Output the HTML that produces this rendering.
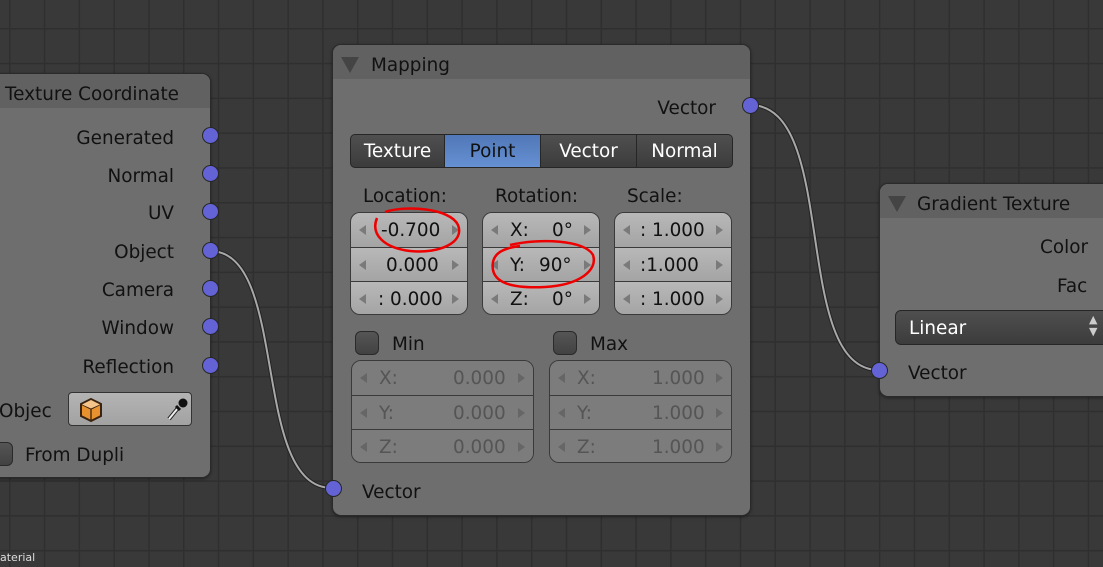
<!DOCTYPE html>
<html><head><meta charset="utf-8"><style>
*{margin:0;padding:0;box-sizing:border-box}
body{width:1103px;height:567px;overflow:hidden;position:relative;background:#393939;
background-image:linear-gradient(#2f2f2f 1.4px,transparent 1.4px),linear-gradient(90deg,#2f2f2f 1.4px,transparent 1.4px);
background-size:34.8px 34.8px;background-position:9px 28px;
font-family:"DejaVu Sans","Liberation Sans",sans-serif;font-size:18.4px;color:#111}
.a{position:absolute;white-space:nowrap}
.node{position:absolute;background:#6e6e6e;border:1px solid #2a2a2a;border-radius:9px;overflow:hidden;box-shadow:0 1px 3px rgba(0,0,0,.4)}
.hdr{position:absolute;left:0;right:0;top:0;height:34px;background:#616161}
.tri{position:absolute;width:0;height:0;border-left:9px solid transparent;border-right:9px solid transparent;border-top:16px solid #444}
.sock{position:absolute;width:17px;height:17px;border-radius:50%;background:#6363d6;border:1px solid #262626;margin:-8.5px 0 0 -8.5px}
.r{text-align:right}
.tab{position:absolute;top:133px;height:34px;background:linear-gradient(#4f4f4f,#3c3c3c);color:#fff;text-align:center;line-height:34px;border:1px solid #262626}
.fld{position:absolute;border:1px solid #3a3a3a;border-radius:10px;overflow:hidden}
.row{position:absolute;left:0;right:0;height:34px;background:linear-gradient(#b8b8b8,#a4a4a4);border-top:1px solid #3a3a3a;line-height:35px}
.row:first-child{border-top:none}
.dis .row{background:#7c7c7c;color:#555}
.la,.ra{position:absolute;top:12px;width:0;height:0;border-top:5px solid transparent;border-bottom:5px solid transparent}
.la{left:8px;border-right:7px solid #7a7a7a}
.ra{right:8px;border-left:7px solid #7a7a7a}
.dis .la{border-right-color:#666}.dis .ra{border-left-color:#666}
.chk{position:absolute;width:24px;height:24px;border-radius:6px;background:linear-gradient(#555,#424242);border:1px solid #2a2a2a}
</style></head><body>

<svg class="a" style="left:0;top:0" width="1103" height="567">
<path d="M210 251 C 290 251, 250 488, 332 488" stroke="#222" stroke-width="4" fill="none"/>
<path d="M210 251 C 290 251, 250 488, 332 488" stroke="#a8a8a8" stroke-width="2" fill="none"/>
<path d="M750 105 C 840 105, 790 370, 879 370" stroke="#222" stroke-width="4" fill="none"/>
<path d="M750 105 C 840 105, 790 370, 879 370" stroke="#a8a8a8" stroke-width="2" fill="none"/>
</svg>

<!-- Texture Coordinate -->
<div class="node" style="left:-12px;top:73px;width:223px;height:405px">
<div class="hdr"></div>
<div class="a" style="left:16px;top:10px">Texture Coordinate</div>
<div class="a r" style="right:36px;top:54px">Generated</div>
<div class="a r" style="right:36px;top:92px">Normal</div>
<div class="a r" style="right:36px;top:129px">UV</div>
<div class="a r" style="right:36px;top:168px">Object</div>
<div class="a r" style="right:36px;top:206px">Camera</div>
<div class="a r" style="right:36px;top:244px">Window</div>
<div class="a r" style="right:36px;top:283px">Reflection</div>
<div class="a" style="left:10px;top:327px">Objec</div>
<div class="a" style="left:79px;top:318px;width:124px;height:34px;border:1px solid #333;border-radius:4px;background:linear-gradient(#b4b4b4,#a2a2a2)"></div>
<svg class="a" style="left:89px;top:323px" width="26" height="26" viewBox="0 0 26 26"><path d="M13 2 L23 7 L23 19 L13 24 L3 19 L3 7Z" fill="#e8912f" stroke="#3a2410" stroke-width="2"/><path d="M3 7 L13 12 L23 7 M13 12 V24" stroke="#3a2410" stroke-width="1.3" fill="none"/><path d="M4 7.5 L13 3 L22 7.5 L13 11.5Z" fill="#f5c48a"/></svg>
<svg class="a" style="left:176px;top:322px" width="24" height="26" viewBox="0 0 24 26"><path d="M4 23 L13 12" stroke="#222" stroke-width="4"/><path d="M4 23 L13 12" stroke="#eee" stroke-width="2"/><circle cx="18" cy="7" r="4.5" fill="#111"/><path d="M11 10 L15 14" stroke="#111" stroke-width="3"/></svg>
<div class="chk" style="left:0;top:368px"></div>
<div class="a" style="left:36px;top:371px">From Dupli</div>
</div>
<div class="sock" style="left:210px;top:135px"></div>
<div class="sock" style="left:210px;top:173px"></div>
<div class="sock" style="left:210px;top:211px"></div>
<div class="sock" style="left:210px;top:250px"></div>
<div class="sock" style="left:210px;top:288px"></div>
<div class="sock" style="left:210px;top:326px"></div>
<div class="sock" style="left:210px;top:365px"></div>
<div class="a" style="left:0;top:551px;font-size:11px;color:#ddd">aterial</div>

<!-- Mapping -->
<div class="node" style="left:332px;top:44px;width:419px;height:472px">
<div class="hdr"></div>
<div class="tri" style="left:8px;top:12px"></div>
<div class="a" style="left:38px;top:10px">Mapping</div>
<div class="a r" style="right:34px;top:53px">Vector</div>
<div class="tab" style="left:17px;width:95px;border-radius:5px 0 0 5px;top:89px">Texture</div>
<div class="tab" style="left:111px;width:97px;top:89px;background:linear-gradient(#5178b8,#6590d2);color:#111">Point</div>
<div class="tab" style="left:207px;width:97px;top:89px">Vector</div>
<div class="tab" style="left:303px;width:97px;top:89px;border-radius:0 5px 5px 0">Normal</div>
<div class="a" style="left:30px;top:141px">Location:</div>
<div class="a" style="left:162px;top:141px">Rotation:</div>
<div class="a" style="left:294px;top:141px">Scale:</div>

<div class="fld" style="left:17px;top:167px;width:118px;height:103px">
<div class="row" style="top:0"><i class="la"></i><span class="a" style="left:30px">-0.700</span><i class="ra"></i></div>
<div class="row" style="top:34px"><i class="la"></i><span class="a" style="left:35px">0.000</span><i class="ra"></i></div>
<div class="row" style="top:68px"><i class="la"></i><span class="a" style="left:27px">: 0.000</span><i class="ra"></i></div>
</div>
<div class="fld" style="left:149px;top:167px;width:118px;height:103px">
<div class="row" style="top:0"><i class="la"></i><span class="a" style="left:27px">X:</span><span class="a" style="left:69px">0°</span><i class="ra"></i></div>
<div class="row" style="top:34px"><i class="la"></i><span class="a" style="left:27px">Y:</span><span class="a" style="left:56px">90°</span><i class="ra"></i></div>
<div class="row" style="top:68px"><i class="la"></i><span class="a" style="left:27px">Z:</span><span class="a" style="left:69px">0°</span><i class="ra"></i></div>
</div>
<div class="fld" style="left:281px;top:167px;width:118px;height:103px">
<div class="row" style="top:0"><i class="la"></i><span class="a" style="left:25px">: 1.000</span><i class="ra"></i></div>
<div class="row" style="top:34px"><i class="la"></i><span class="a" style="left:25px">:1.000</span><i class="ra"></i></div>
<div class="row" style="top:68px"><i class="la"></i><span class="a" style="left:25px">: 1.000</span><i class="ra"></i></div>
</div>

<div class="chk" style="left:22px;top:286px"></div>
<div class="a" style="left:59px;top:289px">Min</div>
<div class="chk" style="left:220px;top:286px"></div>
<div class="a" style="left:257px;top:289px">Max</div>

<div class="fld dis" style="left:18px;top:315px;width:183px;height:103px">
<div class="row" style="top:0"><i class="la"></i><span class="a" style="left:27px">X:</span><span class="a" style="left:101px">0.000</span><i class="ra"></i></div>
<div class="row" style="top:34px"><i class="la"></i><span class="a" style="left:27px">Y:</span><span class="a" style="left:101px">0.000</span><i class="ra"></i></div>
<div class="row" style="top:68px"><i class="la"></i><span class="a" style="left:27px">Z:</span><span class="a" style="left:101px">0.000</span><i class="ra"></i></div>
</div>
<div class="fld dis" style="left:216px;top:315px;width:183px;height:103px">
<div class="row" style="top:0"><i class="la"></i><span class="a" style="left:27px">X:</span><span class="a" style="left:102px">1.000</span><i class="ra"></i></div>
<div class="row" style="top:34px"><i class="la"></i><span class="a" style="left:27px">Y:</span><span class="a" style="left:102px">1.000</span><i class="ra"></i></div>
<div class="row" style="top:68px"><i class="la"></i><span class="a" style="left:27px">Z:</span><span class="a" style="left:102px">1.000</span><i class="ra"></i></div>
</div>
<div class="a" style="left:29px;top:437px">Vector</div>
</div>
<div class="sock" style="left:750px;top:105px"></div>
<div class="sock" style="left:333px;top:488px"></div>

<!-- Gradient -->
<div class="node" style="left:879px;top:183px;width:240px;height:214px">
<div class="hdr"></div>
<div class="tri" style="left:8px;top:12px"></div>
<div class="a" style="left:37px;top:10px">Gradient Texture</div>
<div class="a" style="left:160px;top:53px">Color</div>
<div class="a" style="left:177px;top:92px">Fac</div>
<div class="a" style="left:15px;top:126px;width:230px;height:35px;border:1px solid #262626;border-radius:6px;background:linear-gradient(#4f4f4f,#3c3c3c);color:#fff;line-height:35px;padding-left:13px">Linear</div>
<div class="a" style="left:209px;top:130px;color:#ccc;font-size:11px;line-height:12px">▲<br>▼</div>
<div class="a" style="left:28px;top:179px">Vector</div>
</div>
<div class="sock" style="left:879px;top:370px"></div>

<!-- red annotations -->
<svg class="a" style="left:0;top:0" width="1103" height="567">
<path d="M385 212 C 405 205, 450 208, 458 225 C 465 242, 440 254, 410 251 C 385 248, 370 235, 377 218" stroke="#e00" stroke-width="2.5" fill="none"/>
<path d="M510 245 C 540 238, 585 240, 593 255 C 598 270, 580 285, 545 287 C 505 289, 490 280, 493 262 C 495 252, 505 248, 520 246" stroke="#e00" stroke-width="2.5" fill="none"/>
</svg>
</body></html>
